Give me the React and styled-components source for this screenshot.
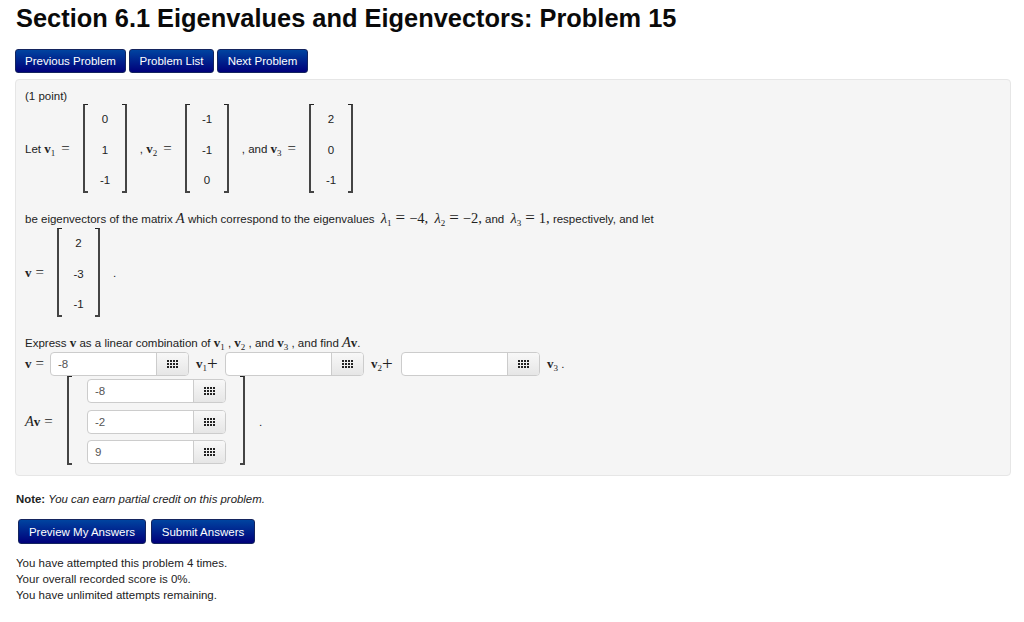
import React from "react";
import styled, { createGlobalStyle } from "styled-components";

const Global = createGlobalStyle`
  html, body { margin: 0; padding: 0; background: #fff; }
  body { font-family: "Liberation Sans", Arial, sans-serif; font-size: 11.5px; line-height: 16px; color: #222; }
`;
const Page = styled.div`
  width: 1024px; height: 622px; overflow: hidden; box-sizing: border-box;
  padding: 0 13px 0 15px;
`;
const Title = styled.h1`
  margin: 0; padding-top: 2px; height: 49px; box-sizing: border-box;
  font-size: 25.4px; line-height: 32px; font-weight: 700; color: #0a0a0a; padding-left: 1px;
`;
const NavBar = styled.div`display: flex; gap: 3px; height: 24px; margin-bottom: 6px;`;
const Button = styled.button`
  box-sizing: border-box; height: ${p => p.$h || 24}px; padding: 0; width: ${p => p.$w}px;
  font: 11.5px/16px "Liberation Sans", Arial, sans-serif; color: #fff;
  background: linear-gradient(#0044a0, #00007a);
  border: 1px solid #14245e; border-radius: 3px;
`;
const Well = styled.div`
  box-sizing: border-box; height: 397px; padding: 8px 8px 0 9px;
  background: #f5f5f5; border: 1px solid #e6e6e6; border-radius: 4px;
`;
const Para = styled.div`height: 16px; white-space: pre; margin-top: ${p => p.$mt || 0}px;`;
const MathLine = styled.div`
  display: flex; align-items: center; height: ${p => p.$h}px; margin-top: ${p => p.$mt || 0}px; white-space: pre;
`;
const Label = styled.span`
  display: inline-block; width: ${p => p.$w}px; margin-left: ${p => p.$ml || 0}px; margin-top: ${p => p.$mt || 0}px;
  flex: none; white-space: pre;
`;
const MV = styled.b`font: 700 13px/0 "Liberation Serif", serif;`;
const MI = styled.i`font: italic 14.5px/0 "Liberation Serif", serif; margin-left: ${p => p.$ml || 0}px;`;
const MN = styled.span`font: 14.5px/0 "Liberation Serif", serif;`;
const Eq = styled.span`
  font: ${p => p.$size || 15}px/0 "Liberation Serif", serif;
  margin: 0 ${p => p.$right ?? 4}px 0 ${p => p.$left ?? 6}px;
`;
const Plus = styled.span`font: 19px/0 "Liberation Serif", serif; vertical-align: -2px;`;
const Sub = styled.sub`font: 9px/0 "Liberation Serif", serif; vertical-align: -3px;`;
const Matrix = styled.div`display: flex; align-items: stretch; flex: none; height: 89px;`;
const Bracket = styled.div`
  box-sizing: border-box; width: 5px; flex: none;
  border-top: 1px solid #222; border-bottom: 2px solid #444;
  ${p => (p.$right ? "border-right: 2px solid #444;" : "border-left: 2px solid #444;")}
`;
const Cells = styled.div`
  width: ${p => p.$w}px; display: flex; flex-direction: column; justify-content: space-between; align-items: center;
  padding: 7px 0 5px;
`;
const InputGroup = styled.div`
  display: flex; box-sizing: border-box; flex: none; width: 139px; height: 24px;
  border: 1px solid #ccc; border-radius: 4px; background: #fff; overflow: hidden;
`;
const Field = styled.div`flex: 1; padding-left: 7px; line-height: 23px; color: #555;`;
const Keypad = styled.div`
  box-sizing: border-box; width: 32px; display: flex; align-items: center; justify-content: center;
  background: linear-gradient(#f8f8f8, #e6e6e6); border-left: 1px solid #ccc;
`;
const Stack = styled.div`
  display: flex; flex-direction: column; gap: 6.5px; width: 139px; margin: 3px 14px 0 15px;
`;
const Note = styled.div`margin-top: 15px; height: 16px; padding-left: 1px; font-size: 11.4px;`;
const Actions = styled.div`display: flex; gap: 5px; margin: 12px 0 0 3px;`;
const Status = styled.div`margin-top: 11px; padding-left: 1px;`;

const GridIcon = () => (
  <svg width="11" height="8" viewBox="0 0 11 8" fill="#222" shapeRendering="crispEdges">
    {[0, 3, 6].map(y => [0, 3, 6, 9].map(x => <rect key={`${x}-${y}`} x={x} y={y} width="2" height="2" />))}
  </svg>
);
const Answer = ({ value }) => (
  <InputGroup>
    <Field>{value}</Field>
    <Keypad><GridIcon /></Keypad>
  </InputGroup>
);
const Vec = ({ values, w = 34 }) => (
  <Matrix>
    <Bracket />
    <Cells $w={w}>{values.map((v, i) => <span key={i}>{v}</span>)}</Cells>
    <Bracket $right />
  </Matrix>
);
const V = ({ n }) => <><MV>v</MV>{n && <Sub>{n}</Sub>}</>;
const LambdaEq = ({ n, value }) => (
  <>
    <MI $ml={3}>λ</MI><Sub>{n}</Sub><Eq $size={17} $left={4} $right={4}>=</Eq><MN>{value}</MN>
  </>
);

export default function App() {
  return (
    <Page>
      <Global />
      <Title>Section 6.1 Eigenvalues and Eigenvectors: Problem 15</Title>
      <NavBar>
        <Button $w={111}>Previous Problem</Button>
        <Button $w={85}>Problem List</Button>
        <Button $w={91}>Next Problem</Button>
      </NavBar>
      <Well>
        <Para>(1 point)</Para>
        <MathLine $h={89}>
          <Label $w={58}>Let <V n="1" /><Eq>=</Eq></Label>
          <Vec values={["0", "1", "-1"]} />
          <Label $w={58}>    , <V n="2" /><Eq>=</Eq></Label>
          <Vec values={["-1", "-1", "0"]} />
          <Label $w={80}>    , and <V n="3" /><Eq>=</Eq></Label>
          <Vec values={["2", "0", "-1"]} />
        </MathLine>
        <Para $mt={18}>
          be eigenvectors of the matrix <MI>A</MI> which correspond to the eigenvalues <LambdaEq n="1" value="−4," /> <LambdaEq n="2" value="−2," /> and <LambdaEq n="3" value="1," /> respectively, and let
        </Para>
        <MathLine $h={89} $mt={1}>
          <Label $w={32}><V /><Eq $left={4}>=</Eq></Label>
          <Vec values={["2", "-3", "-1"]} w={33} />
          <Label $w={20} $ml={13}>.</Label>
        </MathLine>
        <Para $mt={18}>
          Express <V /> as a linear combination of <V n="1" /> , <V n="2" /> , and <V n="3" /> , and find <MI>A</MI><V />.
        </Para>
        <MathLine $h={24} $mt={1}>
          <Label $w={25}><V /><Eq $left={4} $right={0}>=</Eq></Label>
          <Answer value="-8" />
          <Label $w={29} $ml={7}><V n="1" /><Plus>+</Plus></Label>
          <Answer />
          <Label $w={30} $ml={7}><V n="2" /><Plus>+</Plus></Label>
          <Answer />
          <Label $w={30} $ml={7}><V n="3" /> .</Label>
        </MathLine>
        <MathLine $h={89}>
          <Label $w={42} $mt={2}><MI>A</MI><V /><Eq $left={4} $right={0}>=</Eq></Label>
          <Matrix>
            <Bracket />
            <Stack>
              <Answer value="-8" />
              <Answer value="-2" />
              <Answer value="9" />
            </Stack>
            <Bracket $right />
          </Matrix>
          <Label $w={20} $ml={14} $mt={2}>.</Label>
        </MathLine>
      </Well>
      <Note><b>Note:</b> <i>You can earn partial credit on this problem.</i></Note>
      <Actions>
        <Button $w={128} $h={25}>Preview My Answers</Button>
        <Button $w={104} $h={25}>Submit Answers</Button>
      </Actions>
      <Status>
        You have attempted this problem 4 times.<br />
        Your overall recorded score is 0%.<br />
        You have unlimited attempts remaining.
      </Status>
    </Page>
  );
}
